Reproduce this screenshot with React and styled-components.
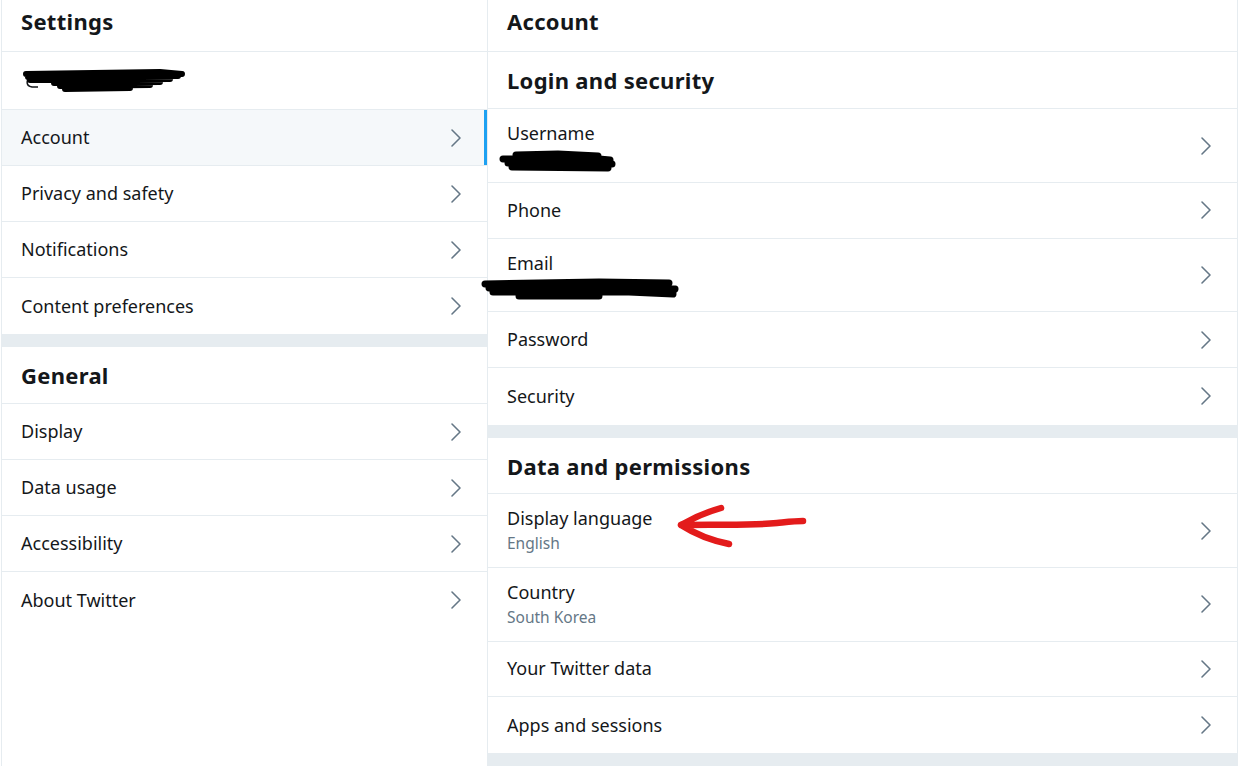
import React from 'react';
import styled, { createGlobalStyle } from 'styled-components';

const Global = createGlobalStyle`
	html, body {
		margin: 0;
		padding: 0;
		background: #ffffff;
	}
	body {
		font-family: 'Noto Sans', 'Noto Sans CJK KR', sans-serif;
		color: #14171a;
		overflow: hidden;
	}
`;

const Page = styled.div`
	display: flex;
	align-items: stretch;
	height: 766px;
	padding-left: 1px;
`;

const Column = styled.section`
	display: flex;
	flex-direction: column;
	width: ${(p) => p.width}px;
	border-left: ${(p) => (p.first ? '1px solid #e6ecf0' : 'none')};
	border-right: 1px solid #e6ecf0;
	flex-shrink: 0;
`;

const TopHeader = styled.header`
	border-bottom: 1px solid #e6ecf0;
	display: flex;
	align-items: center;
	padding: 0 0 9px 19px;
	height: 42px;
	font-size: 22px;
	font-weight: 700;
	letter-spacing: 0.3px;
`;

const SectionTitle = styled.h2`
	margin: 0;
	height: ${(p) => (p.first ? 58 : 57)}px;
	box-sizing: border-box;
	border-bottom: 1px solid #e6ecf0;
	display: flex;
	align-items: center;
	padding-left: 19px;
	font-size: 22px;
	font-weight: 700;
	letter-spacing: 0.3px;
`;

const Handle = styled.div`
	height: 58px;
	box-sizing: border-box;
	border-bottom: 1px solid #e6ecf0;
	padding-left: 18px;
	display: flex;
	align-items: center;
`;

const Row = styled.div`
	position: relative;
	height: ${(p) => p.height}px;
	box-sizing: border-box;
	border-bottom: ${(p) => (p.last ? 'none' : '1px solid #e6ecf0')};
	background: ${(p) => (p.active ? '#f5f8fa' : '#ffffff')};
	display: flex;
	align-items: center;
	padding: 0 25px 0 19px;
	&::after {
		content: '';
		display: ${(p) => (p.active ? 'block' : 'none')};
		position: absolute;
		right: 0;
		top: 0;
		bottom: 0;
		width: 3px;
		background: #1da1f2;
	}
`;

const RowText = styled.div`
	flex: 1;
	display: flex;
	flex-direction: column;
`;

const Label = styled.span`
	font-size: 18px;
	line-height: 25px;
	color: #14171a;
`;

const Sub = styled.span`
	font-size: 15.5px;
	line-height: 24px;
	color: #657786;
	min-height: 24px;
`;

const Gap = styled.div`
	height: 13px;
	background: #e6ecf0;
	flex-shrink: 0;
`;

const Overlay = styled.svg`
	position: absolute;
	left: ${(p) => p.left}px;
	top: ${(p) => p.top}px;
	pointer-events: none;
`;

const Chevron = () => (
	<svg width="12" height="20" viewBox="0 0 12 20" fill="none">
		<path d="M2 2l8 8-8 8" stroke="#657786" strokeWidth="1.6" strokeLinecap="round" strokeLinejoin="round" />
	</svg>
);

const Scribble = ({ width, height, left, top, d }) => (
	<Overlay width={width} height={height} left={left} top={top} viewBox={`0 0 ${width} ${height}`}>
		<path d={d} stroke="#000" strokeWidth="7" strokeLinecap="round" strokeLinejoin="round" fill="none" />
	</Overlay>
);

const Arrow = () => (
	<Overlay width="135" height="46" left={189} top={10} viewBox="0 0 135 46">
		<path
			d="M4 21 C40 20 70 22 100 19 C110 18 118 17 126 17 M4 21 C16 14 30 8 44 4 M4 21 C18 30 32 36 52 40"
			stroke="#e31b1b"
			strokeWidth="6.5"
			strokeLinecap="round"
			strokeLinejoin="round"
			fill="none"
		/>
	</Overlay>
);

const Item = ({ label, sub, active, last, height, children }) => (
	<Row active={active} last={last} height={height || (sub !== undefined ? 74 : 56)}>
		<RowText>
			<Label>{label}</Label>
			{sub !== undefined && <Sub>{sub}</Sub>}
		</RowText>
		<Chevron />
		{children}
	</Row>
);

export default function App() {
	return (
		<>
			<Global />
			<Page>
				<Column first width={485}>
					<TopHeader>Settings</TopHeader>
					<Handle>
						<svg width="170" height="30" viewBox="0 0 170 30" fill="none">
							<path d="M12 11 C6 12 5 20 12 21 L18 21" stroke="#14171a" strokeWidth="1.5" fill="none" />
							<path
								d="M6 8 L140 6 L162 8 M8 11 L158 10 M10 14 L150 13 M34 17 L140 16 M40 20 L130 19 M45 23 L110 22"
								stroke="#000"
								strokeWidth="6"
								strokeLinecap="round"
								strokeLinejoin="round"
							/>
						</svg>
					</Handle>
					<Item label="Account" active />
					<Item label="Privacy and safety" />
					<Item label="Notifications" />
					<Item label="Content preferences" last />
					<Gap />
					<SectionTitle>General</SectionTitle>
					<Item label="Display" />
					<Item label="Data usage" />
					<Item label="Accessibility" />
					<Item label="About Twitter" last />
				</Column>
				<Column width={749}>
					<TopHeader>Account</TopHeader>
					<SectionTitle first>Login and security</SectionTitle>
					<Item label="Username" sub="">
						<Scribble
							width={120}
							height={26}
							left={10}
							top={40}
							d="M18 6 L60 5 L100 7 M5 10 L90 9 L112 11 M10 14 L100 14 L114 15 M14 18 L110 19"
						/>
					</Item>
					<Item label="Phone" />
					<Item label="Email" sub="">
						<Scribble
							width={205}
							height={28}
							left={-9}
							top={37}
							d="M6 8 L120 6 L190 7 M10 12 L180 11 L196 13 M14 16 L150 16 L194 18 M40 20 L120 20"
						/>
					</Item>
					<Item label="Password" />
					<Item label="Security" last height={57} />
					<Gap />
					<SectionTitle>Data and permissions</SectionTitle>
					<Item label="Display language" sub="English">
						<Arrow />
					</Item>
					<Item label="Country" sub="South Korea" />
					<Item label="Your Twitter data" />
					<Item label="Apps and sessions" last />
					<Gap />
				</Column>
			</Page>
		</>
	);
}
